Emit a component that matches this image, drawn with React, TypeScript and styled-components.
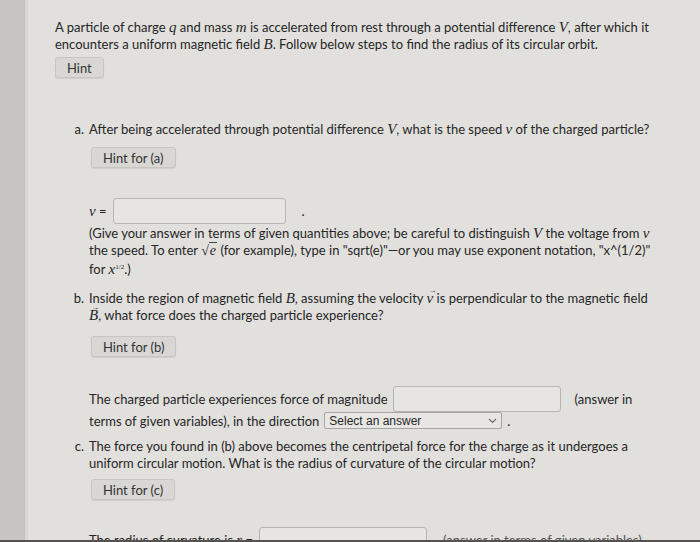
import React from 'react';
import styled, { createGlobalStyle } from 'styled-components';

const GlobalStyle = createGlobalStyle`
  html, body {
    margin: 0;
    padding: 0;
    background: #e1e0dd;
  }
`;

const Page = styled.div`
  display: flex;
  width: 700px;
  height: 542px;
  overflow: hidden;
  background: #e1e0dd;
  font-family: Lato, "Open Sans", sans-serif;
  font-size: 13px;
  color: #262626;
  box-sizing: border-box;
  border-bottom: 2px solid #55524f;
`;

const SideStrip = styled.div`
  width: 25px;
  flex-shrink: 0;
  background: #c7c5c2;
  border-right: 3px solid #d9d7d4;
`;

const Content = styled.div`
  flex: 1;
  padding: 19px 40px 0 27px;
`;

const Para = styled.p`
  margin: 0;
  line-height: 17px;
`;

const HintButton = styled.button<{ $top?: number; $indent?: number }>`
  align-self: flex-start;
  display: block;
  height: 21px;
  margin: ${(p) => p.$top ?? 5}px 0 0 ${(p) => p.$indent ?? 0}px;
  padding: 0 11px;
  font-family: Lato, "Open Sans", sans-serif;
  font-size: 13px;
  color: #333;
  background: #d8d7d4;
  border: 1px solid #c6c5c2;
  border-radius: 3px;
  box-shadow: 0 1px 1px rgba(0, 0, 0, 0.08);
`;

const PartList = styled.div`
  margin-top: 43px;
  display: flex;
  flex-direction: column;
`;

const Part = styled.div<{ $gap?: number }>`
  display: grid;
  grid-template-columns: 34px 1fr;
  margin-top: ${(p) => p.$gap ?? 0}px;
`;

const Label = styled.span`
  text-align: right;
  padding-right: 5px;
  line-height: 17px;
`;

const Body = styled.div`
  display: flex;
  flex-direction: column;
`;

const M = styled.span`
  font-family: "Liberation Serif", "DejaVu Serif", serif;
  font-style: italic;
  font-size: 15px;
`;

const Vec = styled.span`
  position: relative;
  display: inline-block;
  font-family: "Liberation Serif", "DejaVu Serif", serif;
  font-style: italic;
  font-size: 15px;
  line-height: 15px;
  &::after {
    content: '→';
    position: absolute;
    left: 2px;
    top: -8px;
    font-style: normal;
    font-size: 8px;
  }
`;

const AnswerRow = styled.div<{ $top: number }>`
  display: flex;
  align-items: center;
  gap: 6px;
  height: 26px;
  margin-top: ${(p) => p.$top}px;
  white-space: nowrap;
`;

const TextBox = styled.span<{ $w: number }>`
  display: inline-block;
  flex-shrink: 0;
  width: ${(p) => p.$w}px;
  height: 24px;
  background: #e6e5e2;
  border: 1px solid #b6b5b2;
  border-radius: 3px;
`;

const Note = styled.p`
  margin: 1px 0 0;
  line-height: 17px;
`;

const Sqrt = styled.span`
  font-family: "Liberation Serif", serif;
  font-size: 14px;
  & > i {
    border-top: 1px solid #444;
    padding: 0 1px;
  }
`;

const Sup = styled.sup`
  font-size: 7px;
  font-family: "Liberation Serif", serif;
`;

const ForceBlock = styled.div`
  margin-top: 30px;
  display: flex;
  flex-direction: column;
`;

const InlineRow = styled.div<{ $h: number }>`
  display: flex;
  align-items: center;
  gap: 5px;
  height: ${(p) => p.$h}px;
  white-space: nowrap;
`;

const Spacer = styled.span<{ $w: number }>`
  display: inline-block;
  width: ${(p) => p.$w}px;
`;

const SelectBox = styled.span`
  display: inline-flex;
  align-items: center;
  justify-content: space-between;
  width: 178px;
  height: 17px;
  padding: 0 4px;
  font-family: "Liberation Sans", Arial, sans-serif;
  font-size: 12px;
  background: #e7e6e3;
  border: 1px solid #a6a5a2;
  border-radius: 2px;
  box-sizing: border-box;
`;

const Chevron = () => (
  <svg width="9" height="6" viewBox="0 0 9 6">
    <path d="M1 1l3.5 3.5L8 1" fill="none" stroke="#666" strokeWidth="1.1" />
  </svg>
);

const Faded = styled.span`
  color: #555;
`;

export default function App() {
  return (
    <>
      <GlobalStyle />
      <Page>
        <SideStrip />
        <Content>
          <Para>
            A particle of charge <M>q</M> and mass <M>m</M> is accelerated from rest through a
            potential difference <M>V</M>, after which it encounters a uniform magnetic field{' '}
            <M>B</M>. Follow below steps to find the radius of its circular orbit.
          </Para>
          <HintButton $top={4}>Hint</HintButton>

          <PartList>
            <Part>
              <Label>a.</Label>
              <Body>
                <Para>
                  After being accelerated through potential difference <M>V</M>, what is the speed{' '}
                  <M>v</M> of the charged particle?
                </Para>
                <HintButton $top={9} $indent={2}>Hint for (a)</HintButton>
                <AnswerRow $top={30}>
                  <span>
                    <M>v</M> =
                  </span>
                  <TextBox $w={171} />
                  <Spacer $w={4} />
                  <span>.</span>
                </AnswerRow>
                <Note>
                  (Give your answer in terms of given quantities above; be careful to distinguish{' '}
                  <M>V</M> the voltage from <M>v</M> the speed. To enter{' '}
                  <Sqrt>
                    √<i>e</i>
                  </Sqrt>{' '}
                  (for example), type in "sqrt(e)"—or you may use exponent notation, "x^(1/2)" for{' '}
                  <M>x</M>
                  <Sup>1/2</Sup>.)
                </Note>
              </Body>
            </Part>

            <Part $gap={12}>
              <Label>b.</Label>
              <Body>
                <Para>
                  Inside the region of magnetic field <M>B</M>, assuming the velocity <Vec>v</Vec> is
                  perpendicular to the magnetic field <Vec>B</Vec>, what force does the charged
                  particle experience?
                </Para>
                <HintButton $top={12} $indent={2}>Hint for (b)</HintButton>
                <ForceBlock>
                  <InlineRow $h={24}>
                    The charged particle experiences force of magnitude
                    <TextBox $w={166} />
                    <Spacer $w={4} />
                    (answer in
                  </InlineRow>
                  <InlineRow $h={19}>
                    terms of given variables), in the direction
                    <SelectBox>
                      Select an answer
                      <Chevron />
                    </SelectBox>
                    .
                  </InlineRow>
                </ForceBlock>
              </Body>
            </Part>

            <Part $gap={8}>
              <Label>c.</Label>
              <Body>
                <Para>
                  The force you found in (b) above becomes the centripetal force for the charge as it
                  undergoes a uniform circular motion. What is the radius of curvature of the circular
                  motion?
                </Para>
                <HintButton $top={7} $indent={2}>Hint for (c)</HintButton>
                <AnswerRow $top={27}>
                  <span>
                    The radius of curvature is <M>r</M> =
                  </span>
                  <TextBox $w={166} />
                  <Spacer $w={4} />
                  <Faded>(answer in terms of given variables)</Faded>
                </AnswerRow>
              </Body>
            </Part>
          </PartList>
        </Content>
      </Page>
    </>
  );
}
